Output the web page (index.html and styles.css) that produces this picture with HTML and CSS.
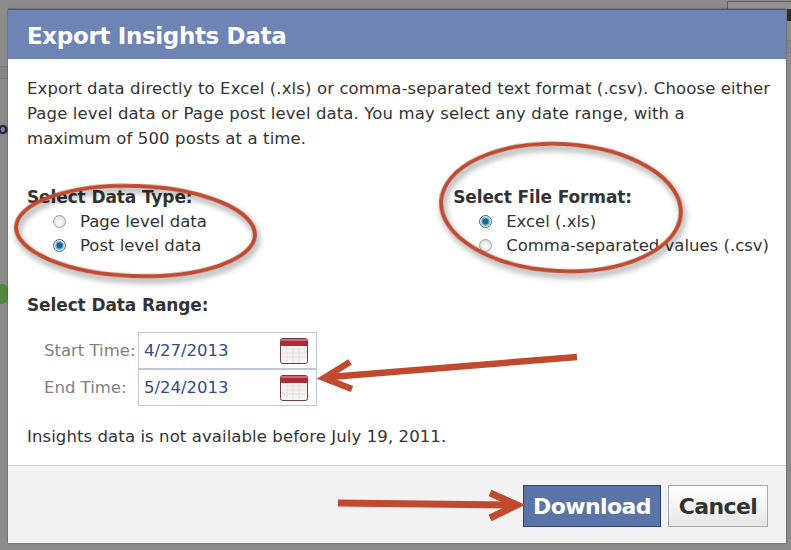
FILE: index.html

```html
<!DOCTYPE html>
<html lang="en">
<head>
    <meta charset="UTF-8">
    <title>Export Insights Data</title>
    <link rel="stylesheet" href="styles.css">
</head>
<body>
    <div class="page-lines">
        <div class="tab"></div>
        <div class="dark-bit"></div>
        <div class="line line-one"></div>
        <div class="line line-two"></div>
        <div class="stray">o</div>
        <div class="green-bit"></div>
    </div>
    <div class="dialog">
        <h2 class="dialog-title">Export Insights Data</h2>
        <div class="dialog-body">
            <p class="intro">Export data directly to Excel (.xls) or comma-separated text format (.csv). Choose either<br>Page level data or Page post level data. You may select any date range, with a<br>maximum of 500 posts at a time.</p>
            <div class="choices">
                <div class="choice-group">
                    <div class="group-label">Select Data Type:</div>
                    <label class="option"><input type="radio" name="level">Page level data</label>
                    <label class="option"><input type="radio" name="level" checked>Post level data</label>
                </div>
                <div class="choice-group">
                    <div class="group-label">Select File Format:</div>
                    <label class="option"><input type="radio" name="format" checked>Excel (.xls)</label>
                    <label class="option"><input type="radio" name="format">Comma-separated values (.csv)</label>
                </div>
            </div>
            <div class="group-label range-label">Select Data Range:</div>
            <div class="date-row">
                <span class="date-label">Start Time:</span>
                <div class="date-box">
                    <span>4/27/2013</span>
                    <svg class="cal" viewBox="0 0 28 26"><rect x="0.5" y="0.5" width="27" height="25" rx="2" fill="#f6f3f2" stroke="#6e3f3f"/><rect x="1" y="1" width="26" height="7" fill="#ab2c36"/><rect x="1" y="1" width="26" height="2" fill="#cf6a6e"/><path d="M2 11h24M2 15h24M2 19h24M7 9v15M13 9v15M19 9v15" stroke="#e2dede" fill="none"/></svg>
                </div>
            </div>
            <div class="date-row">
                <span class="date-label">End Time:</span>
                <div class="date-box">
                    <span>5/24/2013</span>
                    <svg class="cal" viewBox="0 0 28 26"><rect x="0.5" y="0.5" width="27" height="25" rx="2" fill="#f6f3f2" stroke="#6e3f3f"/><rect x="1" y="1" width="26" height="7" fill="#ab2c36"/><rect x="1" y="1" width="26" height="2" fill="#cf6a6e"/><path d="M2 11h24M2 15h24M2 19h24M7 9v15M13 9v15M19 9v15" stroke="#e2dede" fill="none"/></svg>
                </div>
            </div>
            <p class="note">Insights data is not available before July 19, 2011.</p>
        </div>
        <div class="dialog-footer">
            <button class="btn btn-primary">Download</button>
            <button class="btn">Cancel</button>
        </div>
    </div>
    <!-- red marks drawn on top of the screenshot -->
    <svg class="marks" width="791" height="550" viewBox="0 0 791 550">
        <g class="shadowed" fill="none" stroke="#bf4a30" stroke-width="4">
            <ellipse cx="135.500" cy="231" rx="119.500" ry="45" transform="rotate(2 135 231)"/>
            <ellipse cx="561" cy="207.500" rx="120" ry="63.500" transform="rotate(3 561 207)"/>
        </g>
        <g fill="none" stroke="#c0492e" stroke-linecap="butt">
            <path d="M577 357L330 377" stroke-width="6.500"/>
            <path d="M350 362L324 378L352 389" stroke-width="6.500" stroke-miterlimit="6"/>
            <path d="M338 503L516 505" stroke-width="7"/>
            <path d="M490 493L517 505L490 518" stroke-width="7" stroke-miterlimit="6"/>
        </g>
    </svg>
</body>
</html>
```

FILE: styles.css

```css
body {
    margin: 0;
    width: 791px;
    height: 550px;
    overflow: hidden;
    background-color: #8b8b8b;
    font-family: "DejaVu Sans", Tahoma, sans-serif;
    font-size: 16.500px;
    color: #333;
    position: relative;
}

.page-lines div {
    position: absolute;
}

.tab {
    left: 727px;
    top: 1px;
    width: 64px;
    height: 8px;
    border-top: 1px solid #5c5c5c;
    border-left: 1px solid #5c5c5c;
    background-color: #939393;
}

.dark-bit {
    left: 787px;
    top: 9px;
    width: 4px;
    height: 12px;
    background-color: #2e2e2e;
}

.line {
    height: 11px;
    border-top: 1px solid #7b7b86;
    border-bottom: 1px solid #7b7b86;
    background-color: #85858c;
}

.line-one {
    left: 0;
    top: 66px;
    width: 8px;
}

.line-two {
    left: 787px;
    top: 40px;
    width: 4px;
}

.stray {
    left: 0;
    top: 119px;
    width: 8px;
    overflow: hidden;
    color: #1d2c50;
    font-weight: bold;
    text-indent: -3px;
}

.green-bit {
    left: 0;
    top: 284px;
    width: 8px;
    height: 20px;
    border-radius: 0 6px 6px 0;
    background-color: #4f8a3a;
}

.dialog {
    position: relative;
    width: 778px;
    height: 534px;
    margin: 9px 0 0 8px;
    display: flex;
    flex-direction: column;
    background-color: white;
    box-shadow: 0 0 2px #444;
}

.dialog-title {
    margin: 0;
    height: 50px;
    padding-left: 19px;
    background-color: #6d84b4;
    border-top: 1px solid #3b5998;
    box-sizing: border-box;
    color: white;
    font-size: 23px;
    font-weight: bold;
    letter-spacing: -0.350px;
    line-height: 52px;
}

.dialog-body {
    flex: 1;
    padding: 17px 17px 0 19px;
}

.intro {
    margin: 0;
    line-height: 25px;
    letter-spacing: 0.120px;
    white-space: nowrap;
}

.choices {
    display: flex;
    justify-content: space-between;
    margin-top: 34px;
}

.group-label {
    font-size: 17px;
    font-weight: bold;
    letter-spacing: -0.120px;
    line-height: 24px;
}

.option {
    display: flex;
    align-items: center;
    height: 24px;
    padding-left: 26px;
    white-space: nowrap;
}

.option input {
    appearance: none;
    width: 13px;
    height: 13px;
    margin: 0 14px 0 0;
    border: 1px solid #a0a0a0;
    border-radius: 50%;
    box-sizing: border-box;
    background: radial-gradient(circle at 50% 60%, #fff, #d4d4d4);
}

.option input:checked {
    border-color: #3f5f80;
    background: radial-gradient(circle, #0a5f9e 0, #0a6aa8 30%, #e8eef2 65%);
}

.range-label {
    margin-top: 36px;
}

.range-label + .date-row {
    margin-top: 15px;
}

.date-row {
    display: flex;
    align-items: center;
}

.date-label {
    width: 111px;
    padding-left: 17px;
    box-sizing: border-box;
    color: #808080;
    white-space: nowrap;
}

.date-box {
    width: 179px;
    height: 37px;
    padding: 0 8px 0 5px;
    box-sizing: border-box;
    display: flex;
    align-items: center;
    justify-content: space-between;
    border: 1px solid #bdc7d8;
    color: #2f4a8a;
}

.cal {
    width: 28px;
    height: 26px;
}

.note {
    margin: 21px 0 0;
    line-height: 20px;
    letter-spacing: 0.090px;
}

.dialog-footer {
    height: 78px;
    box-sizing: border-box;
    padding: 19px 18px 0 0;
    display: flex;
    justify-content: flex-end;
    align-items: flex-start;
    gap: 7px;
    background-color: #f2f2f2;
    border-top: 1px solid #ccc;
}

.btn {
    height: 42px;
    width: 100px;
    padding: 0;
    font-family: inherit;
    font-size: 22px;
    font-weight: bold;
    letter-spacing: -0.600px;
    color: #333;
    background: linear-gradient(#fff, #e6e6e6);
    border: 1px solid #a9a9a9;
}

.btn-primary {
    width: 138px;
    color: white;
    background: #5b74a8;
    border-color: #29447e;
}

.marks {
    position: absolute;
    left: 0;
    top: 0;
}

.shadowed {
    filter: drop-shadow(2px 4px 3px rgba(0, 0, 0, 0.45));
}
```
